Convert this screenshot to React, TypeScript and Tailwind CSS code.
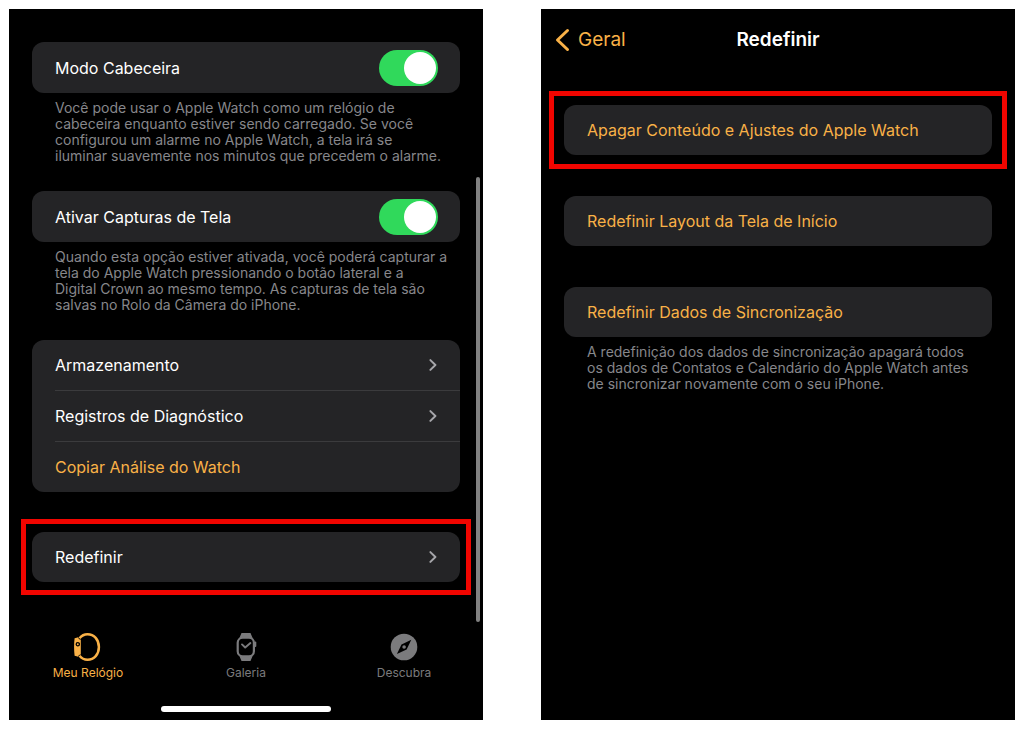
import type { ReactNode } from "react";

function Chevron() {
  return (
    <svg viewBox="0 0 8 12" className="h-3 w-2 shrink-0" fill="none" stroke="#a5a5a9" strokeWidth="2" strokeLinecap="round" strokeLinejoin="round" aria-hidden="true">
      <path d="M1.4 1.1 6.4 6l-5 4.9" />
    </svg>
  );
}

function Card({ children }: { children: ReactNode }) {
  return <div className="overflow-hidden rounded-xl bg-[#242426]">{children}</div>;
}

function Highlight({ children, wide = false }: { children: ReactNode; wide?: boolean }) {
  return (
    <div className="relative">
      {children}
      <div className={`pointer-events-none absolute border-5 border-[#f10500] ${wide ? "-inset-x-[15px] -inset-y-3.5" : "-inset-x-[11px] -inset-y-[13px]"}`} />
    </div>
  );
}

function Row({ label, accent = false, chevron = false }: { label: string; accent?: boolean; chevron?: boolean }) {
  return (
    <button type="button" className={`flex min-h-[50px] w-full items-center justify-between px-[23px] text-left text-base ${accent ? "text-[#f9b147]" : "text-white"}`}>
      <span className="whitespace-nowrap">{label}</span>
      {chevron && <Chevron />}
    </button>
  );
}

function SwitchRow({ id, label }: { id: string; label: string }) {
  return (
    <div className="flex h-[51px] items-center justify-between pr-[22px] pl-[23px]">
      <label htmlFor={id} className="text-base text-white">{label}</label>
      <input
        id={id}
        type="checkbox"
        role="switch"
        defaultChecked
        className="flex h-9 w-[59px] shrink-0 cursor-pointer appearance-none items-center rounded-full bg-[#39393d] p-0.5 before:size-8 before:rounded-full before:bg-white before:content-[''] checked:justify-end checked:bg-[#30d95b]"
      />
    </div>
  );
}

function Caption({ lines }: { lines: string[] }) {
  return (
    <p className="px-[23px] pt-[7px] text-[14px] leading-4 text-[#87878b]">
      {lines.map((line) => (
        <span key={line} className="block whitespace-nowrap">{line} </span>
      ))}
    </p>
  );
}

function WatchSideIcon() {
  return (
    <svg viewBox="0 0 28 30" className="h-[30px] w-7" fill="none" aria-hidden="true">
      <path d="M5.500 6.200C7.600 3.600 10.300 2.200 13.500 2.200c6.700 0 11.400 5.600 11.400 12.800s-4.700 12.800-11.400 12.800c-3.200 0-5.900-1.400-8-4" stroke="#f9b147" strokeWidth="2.500" />
      <path d="M.6 6.300C2 5.900 3.200 5.500 4.200 5.200c.3 1.600 1 2.300 2.600 2.300v15c-1.600 0-2.300.7-2.600 2.300-1-.3-2.200-.7-3.600-1.100-.7-5.800-.7-11.600 0-17.400Z" fill="#f9b147" />
      <circle cx="3.800" cy="12.200" r="1.600" fill="#f9b147" stroke="#000" strokeWidth="1.300" />
    </svg>
  );
}

function WatchFaceIcon() {
  return (
    <svg viewBox="0 0 22 30" className="h-[30px] w-[22px]" fill="none" aria-hidden="true">
      <path d="M6.500 1h9l2.300 5.500H4.200L6.500 1Zm0 28h9l2.300-5.500H4.200L6.500 29Z" fill="#7b7b7d" />
      <rect x="2.700" y="5.700" width="16.200" height="18.600" rx="5" fill="#000" stroke="#7b7b7d" strokeWidth="2.200" />
      <path d="M20.300 10.500v3.500" stroke="#7b7b7d" strokeWidth="2" strokeLinecap="round" />
      <path d="m7 12.400 3.200 3.100 5.200-4.500" stroke="#7b7b7d" strokeWidth="1.900" strokeLinecap="round" strokeLinejoin="round" />
    </svg>
  );
}

function CompassIcon() {
  return (
    <svg viewBox="0 0 28 30" className="h-[30px] w-7" aria-hidden="true">
      <circle cx="14" cy="15" r="13.300" fill="#7b7b7d" />
      <path d="M21.300 7.800 16.600 17.500 6.900 22.100 11.500 12.400Z" fill="#000" />
      <circle cx="14.100" cy="15" r="1.800" fill="#7b7b7d" />
    </svg>
  );
}

function Tab({ label, icon, active = false }: { label: string; icon: ReactNode; active?: boolean }) {
  return (
    <a href="#" aria-current={active ? "page" : undefined} className={`flex flex-1 flex-col items-center gap-[3px] text-xs leading-4 ${active ? "text-[#f9b147]" : "text-[#7b7b7d]"}`}>
      {icon}
      <span>{label}</span>
    </a>
  );
}

export default function App() {
  return (
    <main className="grid min-h-screen grid-cols-2 gap-[58px] bg-white p-[9px] font-['Inter','Liberation_Sans',sans-serif]">
      <section aria-label="Meu Relógio" className="relative flex flex-col bg-black pt-[33px]">
        <div className="flex flex-col px-[23px]">
          <Card><SwitchRow id="bedside" label="Modo Cabeceira" /></Card>
          <Caption
            lines={[
              "Você pode usar o Apple Watch como um relógio de",
              "cabeceira enquanto estiver sendo carregado. Se você",
              "configurou um alarme no Apple Watch, a tela irá se",
              "iluminar suavemente nos minutos que precedem o alarme.",
            ]}
          />
          <div className="mt-[27px]">
            <Card><SwitchRow id="captures" label="Ativar Capturas de Tela" /></Card>
          </div>
          <Caption
            lines={[
              "Quando esta opção estiver ativada, você poderá capturar a",
              "tela do Apple Watch pressionando o botão lateral e a",
              "Digital Crown ao mesmo tempo. As capturas de tela são",
              "salvas no Rolo da Câmera do iPhone.",
            ]}
          />
          <div className="mt-[27px]">
            <Card>
              <Row label="Armazenamento" chevron />
              <div className="ml-[23px] h-px bg-[#3b3b3d]" />
              <Row label="Registros de Diagnóstico" chevron />
              <div className="ml-[23px] h-px bg-[#3b3b3d]" />
              <Row label="Copiar Análise do Watch" accent />
            </Card>
          </div>
          <div className="mt-10">
            <Highlight>
              <Card><Row label="Redefinir" chevron /></Card>
            </Highlight>
          </div>
        </div>
        <nav aria-label="Principal" className="mt-auto flex pb-[25px]">
          <Tab label="Meu Relógio" icon={<WatchSideIcon />} active />
          <Tab label="Galeria" icon={<WatchFaceIcon />} />
          <Tab label="Descubra" icon={<CompassIcon />} />
        </nav>
        <div className="mb-2 h-1.5 w-[170px] self-center rounded-full bg-white" />
        <div className="absolute top-[168px] right-[3px] bottom-[98px] w-1 rounded-full bg-[#818181]" />
      </section>

      <section aria-labelledby="reset-title" className="flex flex-col bg-black">
        <header className="grid h-[62px] grid-cols-[1fr_auto_1fr] items-center px-3.5">
          <a href="#" className="flex items-center gap-2 text-[19px] text-[#f9b147]">
            <svg viewBox="0 0 15 24" className="h-6 w-[15px]" fill="none" stroke="currentColor" strokeWidth="3" strokeLinecap="round" strokeLinejoin="round" aria-hidden="true">
              <path d="M12.500 2.500 2.500 12l10 9.500" />
            </svg>
            Geral
          </a>
          <h1 id="reset-title" className="text-[19px] font-semibold text-white">Redefinir</h1>
        </header>
        <div className="flex flex-col px-[23px] pt-[34px]">
          <Highlight wide>
            <Card><Row label="Apagar Conteúdo e Ajustes do Apple Watch" accent /></Card>
          </Highlight>
          <div className="mt-[41px]">
            <Card><Row label="Redefinir Layout da Tela de Início" accent /></Card>
          </div>
          <div className="mt-[41px]">
            <Card><Row label="Redefinir Dados de Sincronização" accent /></Card>
          </div>
          <Caption
            lines={[
              "A redefinição dos dados de sincronização apagará todos",
              "os dados de Contatos e Calendário do Apple Watch antes",
              "de sincronizar novamente com o seu iPhone.",
            ]}
          />
        </div>
      </section>
    </main>
  );
}
